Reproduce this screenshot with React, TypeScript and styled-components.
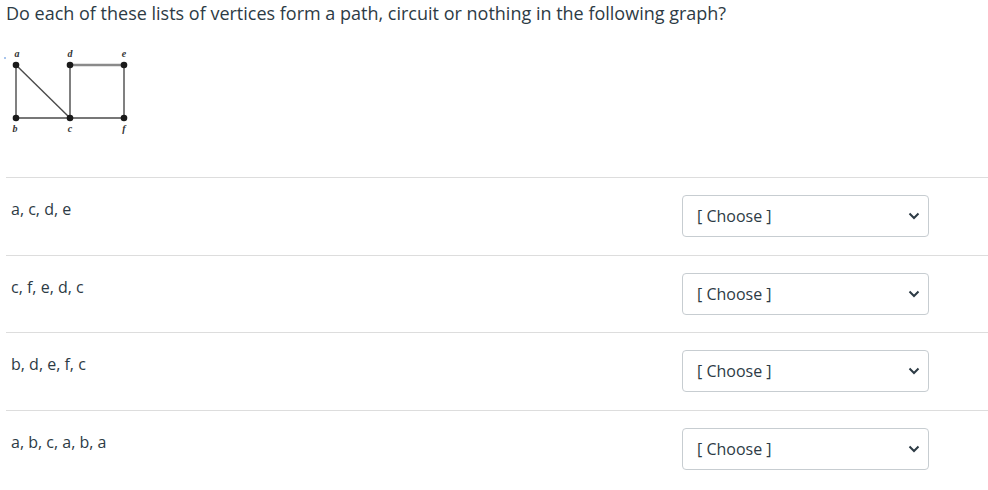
import React from 'react';
import styled, { createGlobalStyle } from 'styled-components';

const GlobalStyle = createGlobalStyle`
  html, body {
    margin: 0;
    padding: 0;
    background: #ffffff;
  }
  body {
    font-family: "Open Sans", "Liberation Sans", sans-serif;
    color: #2d3b45;
    font-size: 16px;
    line-height: 1.5;
  }
`;

const QuestionWrap = styled.div`
  padding: 1px 0 0 6px;
`;

const QuestionText = styled.p`
  margin: 0;
  font-size: 18px;
  line-height: 24px;
`;

const GraphFigure = styled.div`
  margin: 16px 0 36px -6px;
  height: 100px;
`;

const AnswerRow = styled.div`
  display: flex;
  justify-content: space-between;
  align-items: flex-start;
  border-top: 1px solid #dddddd;
  padding: 17px 0 17.5px;
`;

const AnswerLabel = styled.div`
  padding: 2px 0 0 5px;
  font-size: 16px;
  line-height: 24px;
`;

const SelectWrap = styled.div`
  position: relative;
  width: 247px;
  margin-right: 59px;
`;

const Select = styled.select`
  appearance: none;
  -webkit-appearance: none;
  width: 100%;
  height: 42px;
  box-sizing: border-box;
  border: 1px solid #c7cdd1;
  border-radius: 4px;
  background: #ffffff;
  padding: 0 30px 0 14px;
  font-family: "Open Sans", "Liberation Sans", sans-serif;
  font-size: 16px;
  color: #2d3b45;
  outline: none;
`;

const Chevron = styled.svg`
  position: absolute;
  right: 9px;
  top: 17px;
  pointer-events: none;
`;

type Node = { id: string; x: number; y: number; lx: number; ly: number };

const nodes: Node[] = [
  { id: 'a', x: 16, y: 24, lx: 17, ly: 16 },
  { id: 'd', x: 70, y: 24, lx: 70, ly: 16 },
  { id: 'e', x: 124, y: 24, lx: 124, ly: 16 },
  { id: 'b', x: 16, y: 77, lx: 15, ly: 91 },
  { id: 'c', x: 70, y: 77, lx: 70, ly: 91 },
  { id: 'f', x: 124, y: 77, lx: 124, ly: 91 },
];

const edges: [string, string][] = [
  ['a', 'b'],
  ['a', 'c'],
  ['b', 'c'],
  ['c', 'f'],
  ['c', 'd'],
  ['d', 'e'],
  ['e', 'f'],
];

const Graph = () => {
  const byId = (id: string) => nodes.find((n) => n.id === id)!;
  return (
    <svg width="140" height="100" viewBox="0 0 140 100">
      <circle cx="5" cy="17" r="0.8" fill="#3a7bd5" />
      {edges.map(([p, q]) => {
        const a = byId(p);
        const b = byId(q);
        const isGrey = p === 'd' && q === 'e';
        return (
          <line
            key={p + q}
            x1={a.x}
            y1={a.y}
            x2={b.x}
            y2={b.y}
            stroke={isGrey ? '#8a8a8a' : '#4a4a4a'}
            strokeWidth={isGrey ? 2.6 : 1.4}
          />
        );
      })}
      {nodes.map((n) => (
        <g key={n.id}>
          <circle cx={n.x} cy={n.y} r="3.3" fill="#1a1a1a" />
          <text
            x={n.lx}
            y={n.ly}
            textAnchor="middle"
            fontFamily='"Liberation Serif", serif'
            fontStyle="italic"
            fontWeight="bold"
            fontSize="10"
            fill="#333333"
          >
            {n.id}
          </text>
        </g>
      ))}
    </svg>
  );
};

const answers = ['a, c, d, e', 'c, f, e, d, c', 'b, d, e, f, c', 'a, b, c, a, b, a'];

export default function App() {
  return (
    <>
      <GlobalStyle />
      <QuestionWrap>
        <QuestionText>
          Do each of these lists of vertices form a path, circuit or nothing in the following graph?
        </QuestionText>
        <GraphFigure>
          <Graph />
        </GraphFigure>
        {answers.map((a) => (
          <AnswerRow key={a}>
            <AnswerLabel>{a}</AnswerLabel>
            <SelectWrap>
              <Select defaultValue="">
                <option value="">[ Choose ]</option>
                <option value="path">path</option>
                <option value="circuit">circuit</option>
                <option value="nothing">nothing</option>
              </Select>
              <Chevron width="12" height="8" viewBox="0 0 12 8">
                <path d="M1.5 1.5 L6 6 L10.5 1.5" fill="none" stroke="#2d3b45" strokeWidth="2" />
              </Chevron>
            </SelectWrap>
          </AnswerRow>
        ))}
      </QuestionWrap>
    </>
  );
}
